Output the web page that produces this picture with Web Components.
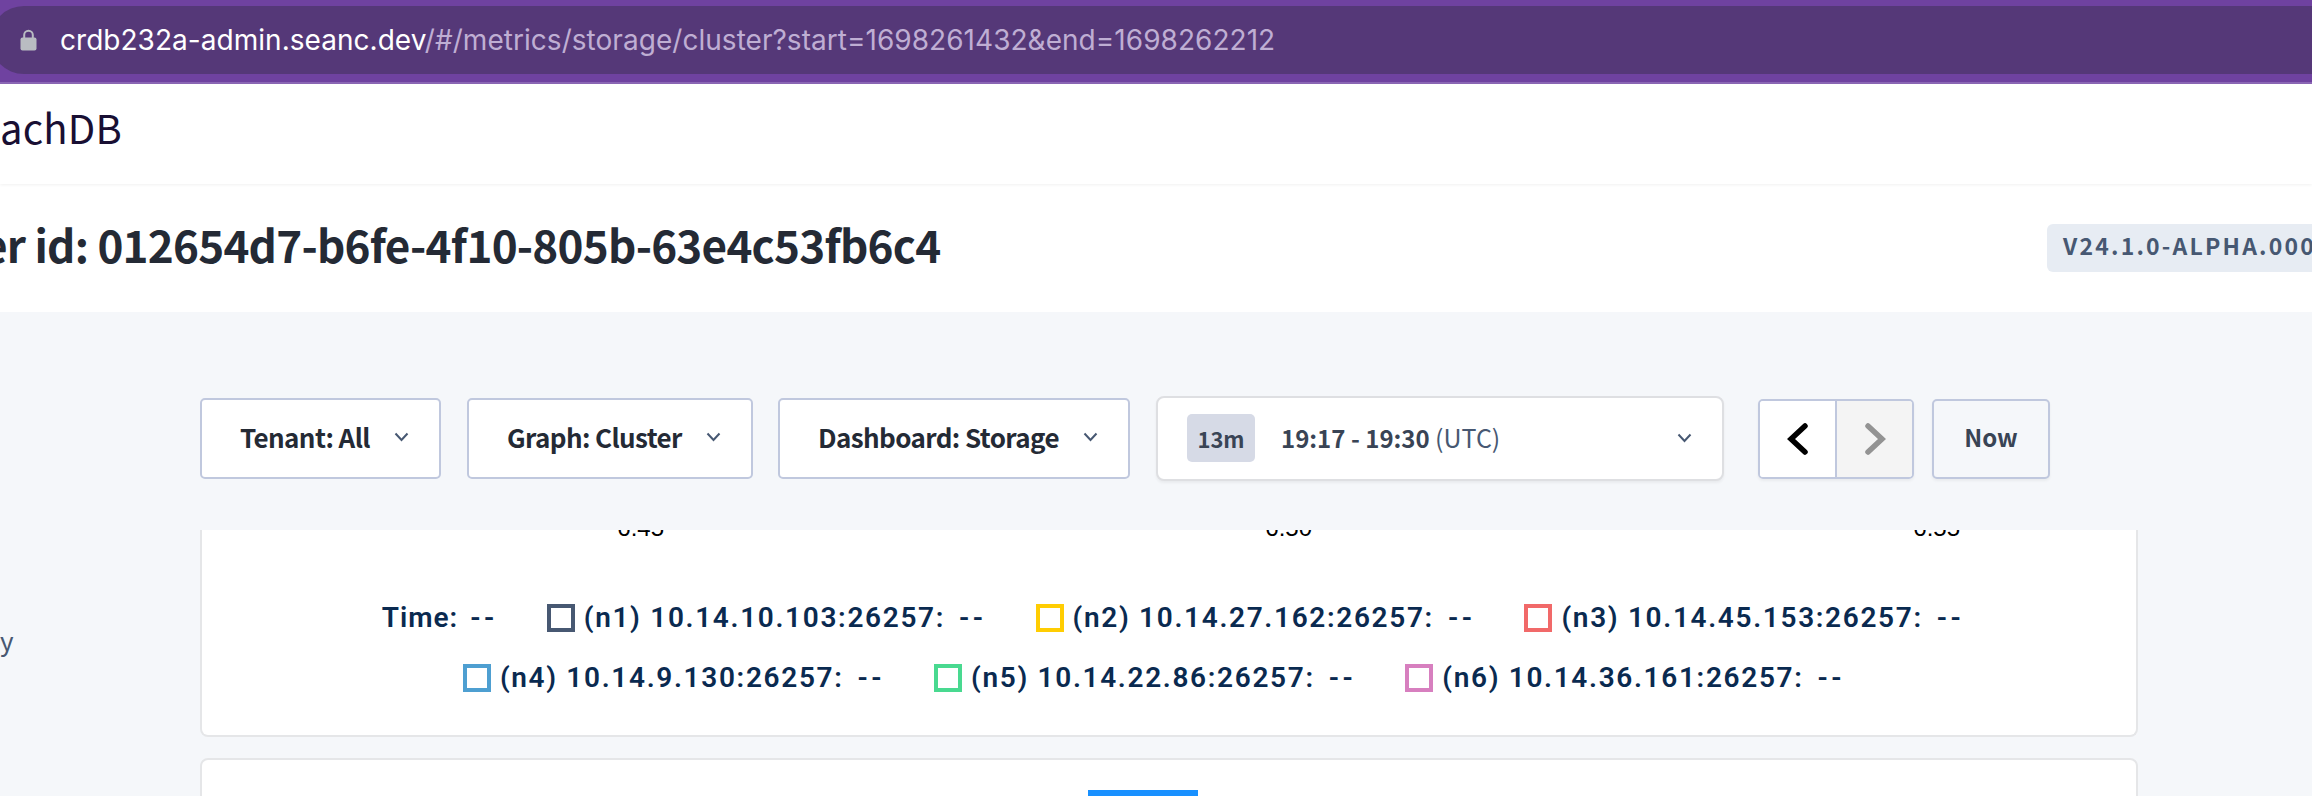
<!DOCTYPE html>
<html>
<head>
<meta charset="utf-8">
<title>Metrics</title>
<style>
  html, body { margin: 0; height: 100%; overflow: hidden; background: #f5f7fa; }
  body { display: flex; flex-direction: column; height: 796px; font-family: "Noto Sans CJK JP", "Noto Sans", sans-serif; }
</style>
</head>
<body>
  <url-bar host="crdb232a-admin.seanc.dev" path="/#/metrics/storage/cluster?start=1698261432&amp;end=1698262212"></url-bar>
  <app-header>achDB</app-header>
  <title-bar version="V24.1.0-ALPHA.0000">er id: 012654d7-b6fe-4f10-805b-63e4c53fb6c4</title-bar>
  <metrics-page>
    <time-controls></time-controls>
    <span slot="side">y</span>
    <graph-card class="first">
      <axis-labels></axis-labels>
      <graph-legend></graph-legend>
    </graph-card>
    <graph-card class="next"><div style="width:110px;height:32px;margin:30px 0 0 886px;background:#1890ff"></div></graph-card>
  </metrics-page>

<script>
class UrlBar extends HTMLElement {
  constructor() {
    super();
    this.attachShadow({ mode: 'open' }).innerHTML = `
      <style>
        :host { display: block; height: 84px; box-sizing: border-box; padding: 6px 0 8px; background: #6f42a0; border-bottom: 2px solid #8b67b5; flex: none; }
        .pill { height: 68px; margin-left: -10px; padding-left: 30px; border-radius: 34px 0 0 34px; background: #553878; display: flex; align-items: center; gap: 23px; font: 400 28px/1 Inter, sans-serif; letter-spacing: .036px; }
        svg { flex: none; }
        .host { color: #fff; }
        .path { color: #bfaed3; }
      </style>
      <div class="pill">
        <svg width="17" height="22" viewBox="0 0 17 22"><path d="M4.2 9V6a4.3 4.3 0 0 1 8.6 0v3" fill="none" stroke="#b9bcc2" stroke-width="2"/><rect x=".5" y="8.5" width="16" height="13" rx="2" fill="#b9bcc2"/></svg>
        <div><span class="host">${this.getAttribute('host')}</span><span class="path">${this.getAttribute('path').replace(/&/g, '&amp;')}</span></div>
      </div>`;
  }
}
customElements.define('url-bar', UrlBar);

class AppHeader extends HTMLElement {
  constructor() {
    super();
    this.attachShadow({ mode: 'open' }).innerHTML = `
      <style>
        :host { display: flex; align-items: center; height: 100px; box-sizing: border-box; background: #fff; overflow: hidden; flex: none; color: #190f33; font: 400 40px/1 "Noto Sans CJK JP", sans-serif; letter-spacing: .2px; box-shadow: 0 1px 3px rgba(0,0,0,.06); position: relative; z-index: 1; padding-bottom: 14px; }
      </style>
      <span><slot></slot></span>`;
  }
}
customElements.define('app-header', AppHeader);

class TitleBar extends HTMLElement {
  constructor() {
    super();
    this.attachShadow({ mode: 'open' }).innerHTML = `
      <style>
        :host { display: flex; align-items: center; justify-content: space-between; height: 128px; background: #fff; overflow: hidden; flex: none; }
        h1 { margin: 0 0 8px -18px; font: 700 44px/1 "Noto Sans CJK JP", sans-serif; letter-spacing: -.76px; color: #242a35; white-space: nowrap; }
        .badge { flex: none; margin-right: -60px; width: 325px; height: 48px; box-sizing: border-box; padding: 0 0 5px 16px; display: flex; align-items: center; background: #e7ecf3; border-radius: 6px; color: #475872; font: 700 23px/1 "Noto Sans CJK JP", sans-serif; letter-spacing: 2.2px; white-space: nowrap; }
      </style>
      <h1><slot></slot></h1>
      <div class="badge">${this.getAttribute('version')}</div>`;
  }
}
customElements.define('title-bar', TitleBar);

class MetricsPage extends HTMLElement {
  constructor() {
    super();
    this.attachShadow({ mode: 'open' }).innerHTML = `
      <style>
        :host { display: grid; grid-template-columns: 200px 1938px; grid-template-rows: 218px auto; flex: 1; min-height: 0; overflow: hidden; background: #f5f7fa; }
        .bar { grid-column: 2; grid-row: 1; padding-top: 84px; }
        .side { grid-column: 1; grid-row: 2; padding-top: 92px; font: 400 26px/36px "Noto Sans CJK JP", sans-serif; color: #475872; }
        .cards { grid-column: 2; grid-row: 2; display: flex; flex-direction: column; gap: 21px; }
      </style>
      <div class="bar"><slot></slot></div>
      <div class="side"><slot name="side"></slot></div>
      <div class="cards"><slot name="cards"></slot></div>`;
    [...this.querySelectorAll('graph-card')].forEach(c => c.slot = 'cards');
  }
}
customElements.define('metrics-page', MetricsPage);

class TimeControls extends HTMLElement {
  constructor() {
    super();
    const chev = `<svg width="15" height="10" viewBox="0 0 15 10"><path d="M1.5 1.5 7.5 8l6-6.5" fill="none" stroke="#475872" stroke-width="2"/></svg>`;
    this.attachShadow({ mode: 'open' }).innerHTML = `
      <style>
        :host { display: flex; align-items: center; height: 85px; }
        .sel { height: 81px; box-sizing: border-box; display: flex; align-items: center; justify-content: space-between; background: #fff; border: 2px solid #c0c8de; border-radius: 5px; padding: 0 30px 3px 38px; font: 700 26px/1 "Noto Sans CJK JP", sans-serif; letter-spacing: -.6px; color: #242a35; white-space: nowrap; }
        .time { width: 568px; height: 85px; padding: 0 30px 2px 29px; border-color: #dedfe2; margin-right: 34px; box-shadow: 0 2px 3px rgba(0,0,0,.05); border-radius: 8px; letter-spacing: 0; }
        .left { display: flex; align-items: center; gap: 26px; }
        .tag { width: 68px; height: 48px; border-radius: 5px; background: #d6dae6; display: flex; align-items: center; justify-content: center; font-size: 22px; color: #394455; }
        .range { font-size: 24px; color: #394455; }
        .range span { font-weight: 400; font-size: 25px; color: #475872; }
        .arrows { display: flex; height: 80px; width: 156px; box-sizing: border-box; border: 2px solid #c0c8de; border-radius: 5px; overflow: hidden; margin-right: 18px; box-shadow: 0 2px 3px rgba(0,0,0,.05); }
        .arrows div { flex: 1; display: flex; align-items: center; justify-content: center; background: #fff; }
        .arrows div + div { background: #f4f4f4; border-left: 2px solid #c0c8de; }
        .now { width: 118px; height: 80px; box-sizing: border-box; border: 2px solid #c0c8de; border-radius: 5px; background: #f5f7fa; padding-bottom: 3px; display: flex; align-items: center; justify-content: center; font: 700 24px/1 "Noto Sans CJK JP", sans-serif; color: #394455; box-shadow: 0 2px 3px rgba(0,0,0,.05); }
      </style>
      <div class="sel" style="width:241px;margin-right:26px">Tenant: All ${chev}</div>
      <div class="sel" style="width:286px;margin-right:25px">Graph: Cluster ${chev}</div>
      <div class="sel" style="width:352px;margin-right:26px">Dashboard: Storage ${chev}</div>
      <div class="sel time">
        <div class="left"><div class="tag">13m</div><div class="range">19:17 - 19:30 <span>(UTC)</span></div></div>
        ${chev}
      </div>
      <div class="arrows">
        <div><svg width="22" height="32" viewBox="0 0 22 32"><path d="M18 3 4 16l14 13" fill="none" stroke="#000" stroke-width="5.5" stroke-linecap="round"/></svg></div>
        <div><svg width="22" height="32" viewBox="0 0 22 32"><path d="M4 3l14 13L4 29" fill="none" stroke="#939393" stroke-width="5.5" stroke-linecap="round"/></svg></div>
      </div>
      <div class="now">Now</div>`;
  }
}
customElements.define('time-controls', TimeControls);

class GraphCard extends HTMLElement {
  constructor() {
    super();
    this.attachShadow({ mode: 'open' }).innerHTML = `
      <style>
        :host { display: block; flex: none; box-sizing: border-box; background: #fff; border: 2px solid #e5e6e8; border-radius: 8px; }
        :host(.first) { border-top: 0; border-radius: 0 0 8px 8px; height: 207px; }
        :host(.next) { height: 120px; }
      </style>
      <slot></slot>`;
  }
}
customElements.define('graph-card', GraphCard);

class AxisLabels extends HTMLElement {
  constructor() {
    super();
    this.attachShadow({ mode: 'open' }).innerHTML = `
      <style>
        :host { display: grid; grid-template-columns: 438px 648px 648px 1fr; height: 73px; overflow: hidden; font: 400 24px/1 "Liberation Sans", sans-serif; color: #000; }
        span { justify-self: end; margin-top: -14px; height: 24px; transform: translateX(24px); }
      </style>
      <span>6:45</span><span>6:50</span><span>6:55</span>`;
  }
}
customElements.define('axis-labels', AxisLabels);

class LegendItem extends HTMLElement {
  constructor() {
    super();
    this.attachShadow({ mode: 'open' }).innerHTML = `
      <style>
        :host { display: inline-flex; align-items: center; gap: 9px; white-space: nowrap; }
        i { width: 28px; height: 28px; box-sizing: border-box; border: 4px solid var(--swatch); }
        .val { margin-left: 5px; letter-spacing: 3.5px; }
      </style>
      <i></i><span><slot></slot></span><span class="val">--</span>`;
    this.style.setProperty('--swatch', this.getAttribute('color'));
  }
}
customElements.define('legend-item', LegendItem);

class GraphLegend extends HTMLElement {
  constructor() {
    super();
    const nodes = [
      ['#475872', '(n1) 10.14.10.103:26257:'],
      ['#ffcd02', '(n2) 10.14.27.162:26257:'],
      ['#f16969', '(n3) 10.14.45.153:26257:'],
      ['#4e9fd1', '(n4) 10.14.9.130:26257:'],
      ['#49d990', '(n5) 10.14.22.86:26257:'],
      ['#d77fbf', '(n6) 10.14.36.161:26257:']
    ];
    const item = n => `<legend-item color="${n[0]}">${n[1]}</legend-item>`;
    this.attachShadow({ mode: 'open' }).innerHTML = `
      <style>
        :host { display: flex; flex-direction: column; align-items: center; gap: 30px; font: 600 28px/30px Roboto, sans-serif; color: #0a2a50; letter-spacing: 1.67px; }
        .row { display: flex; gap: 49px; align-items: center; }
        .row.one { padding-left: 8px; }
        .row.two { padding-right: 30px; }
        .time { letter-spacing: 1px; }
        .val { margin-left: 12px; letter-spacing: 3.5px; }
      </style>
      <div class="row one"><span class="time">Time:<span class="val">--</span></span>${nodes.slice(0, 3).map(item).join('')}</div>
      <div class="row two">${nodes.slice(3).map(item).join('')}</div>`;
  }
}
customElements.define('graph-legend', GraphLegend);
</script>
</body>
</html>
